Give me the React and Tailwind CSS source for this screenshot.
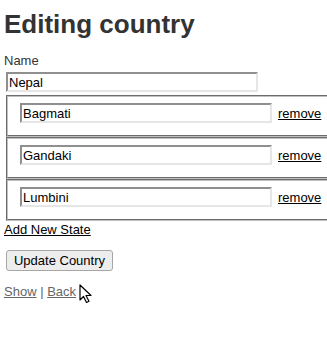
import React, { useState } from 'react';

const inputClass =
  "w-[252px] h-[20px] border-2 border-t-[#8f8f8f] border-l-[#8f8f8f] border-b-[#e6e6e6] border-r-[#e6e6e6] bg-white px-[1px] text-[13px] text-black outline-none";

const StateRow = ({ name }) => (
  <fieldset className="w-[340px] ml-[2px] border-2 [border-style:groove] border-[#c0c0c0] pt-[6px] pb-[12px] pl-[12px]">
    <div className="flex items-center h-[20px]">
      <input type="text" defaultValue={name} className={inputClass} />
      <a href="#" className="ml-[6px] mt-[2px] text-black underline">remove</a>
    </div>
  </fieldset>
);

const App = () => {
  const [country] = useState('Nepal');
  const states = ['Bagmati', 'Gandaki', 'Lumbini'];

  return (
    <div className="relative w-[327px] h-[342px] overflow-hidden bg-white pl-[4px] pt-[9px] font-['Liberation_Sans',Arial,sans-serif] text-[13px] leading-[18px] text-[#333]">
      <h1 className="text-[26px] leading-[30px] font-bold text-[#333]">Editing country</h1>

      <div className="mt-[13px]">Name</div>
      <input type="text" defaultValue={country} className={`${inputClass} mt-[2px] ml-[2px] block`} />

      <div className="mt-[3px] flex flex-col">
        {states.map((s) => (
          <StateRow key={s} name={s} />
        ))}
      </div>

      <a href="#" className="block w-fit text-black underline">Add New State</a>

      <button className="mt-[11px] ml-[2px] block h-[21px] w-[107px] rounded-[3px] border border-[#a6a6a6] bg-[#ededed] text-[13px] text-black">
        Update Country
      </button>

      <div className="mt-[12px] text-[#666]">
        <a href="#" className="underline text-[#666]">Show</a> | <a href="#" className="underline text-[#666]">Back</a>
      </div>

      {/* mouse pointer */}
      <svg className="absolute left-[79px] top-[284px]" width="14" height="20" viewBox="0 0 14 20">
        <path d="M1 1 L1 16 L4.5 12.5 L7.5 18.5 L10 17.3 L7 11.5 L12 11.5 Z" fill="#fff" stroke="#000" strokeWidth="1.2" strokeLinejoin="round" />
      </svg>
    </div>
  );
};

export default App;
